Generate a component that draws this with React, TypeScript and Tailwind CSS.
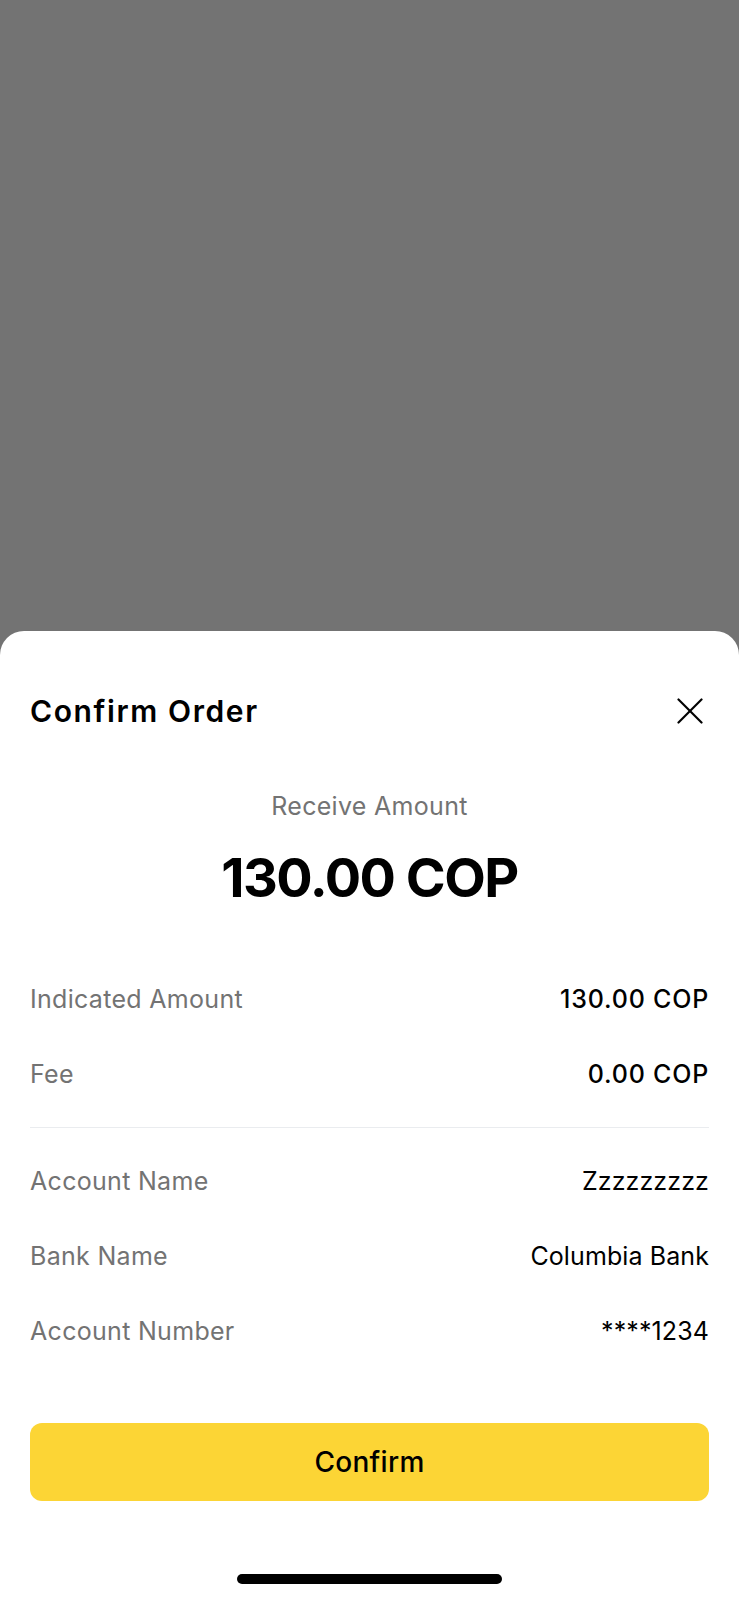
import React from "react";

const ROWS_TOP = [
  { label: "Indicated Amount", value: "130.00 COP" },
  { label: "Fee", value: "0.00 COP" },
];

const ROWS_BOTTOM = [
  { label: "Account Name", value: "Zzzzzzzzz" },
  { label: "Bank Name", value: "Columbia Bank" },
  { label: "Account Number", value: "****1234" },
];

const Row = ({ label, value, strong }: { label: string; value: string; strong?: boolean }) => (
  <div className="flex h-[30px] items-center justify-between">
    <span className="text-[25px] leading-[30px] tracking-[0.3px] text-[#737373]">{label}</span>
    <span
      className={
        strong
          ? "text-[25px] leading-[30px] font-medium tracking-[0.8px] text-black"
          : "text-[25px] leading-[30px] tracking-[0.1px] text-black"
      }
    >
      {value}
    </span>
  </div>
);

export default function App() {
  return (
    <div
      className="flex h-[1600px] w-full flex-col justify-end bg-[#737373]"
      style={{ fontFamily: "Inter, 'Noto Sans', sans-serif" }}
    >
      <div className="flex h-[969px] flex-col rounded-t-[24px] bg-white px-[30px]">
        <div className="mt-[62px] flex h-[36px] items-center justify-between">
          <h1 className="text-[30px] font-semibold leading-[36px] tracking-[1.6px] text-black">Confirm Order</h1>
          <button type="button" className="mr-[6px]">
            <svg width="26" height="26" viewBox="0 0 26 26" fill="none" stroke="#000" strokeWidth="2.2" strokeLinecap="round">
              <line x1="1.5" y1="1.5" x2="24.5" y2="24.5" />
              <line x1="24.5" y1="1.5" x2="1.5" y2="24.5" />
            </svg>
          </button>
        </div>

        <div className="mt-[62px] text-center text-[25px] leading-[30px] tracking-[0.3px] text-[#737373]">
          Receive Amount
        </div>
        <div className="mt-[27px] text-center text-[54px] font-bold leading-[60px] tracking-[-1.5px] text-black">
          130.00 COP
        </div>

        <div className="mt-[76px] flex flex-col gap-[45px]">
          {ROWS_TOP.map((r) => (
            <Row key={r.label} label={r.label} value={r.value} strong />
          ))}
        </div>

        <div className="mt-[38px] h-px bg-[#eaecef]" />

        <div className="mt-[38px] flex flex-col gap-[45px]">
          {ROWS_BOTTOM.map((r) => (
            <Row key={r.label} label={r.label} value={r.value} />
          ))}
        </div>

        <button
          type="button"
          className="mt-[77px] flex h-[78px] items-center justify-center rounded-[12px] bg-[#fcd535] text-[28px] font-medium tracking-[0.3px] text-black"
        >
          Confirm
        </button>

        <div className="mx-auto mt-[73px] h-[10px] w-[265px] rounded-full bg-black" />
      </div>
    </div>
  );
}
